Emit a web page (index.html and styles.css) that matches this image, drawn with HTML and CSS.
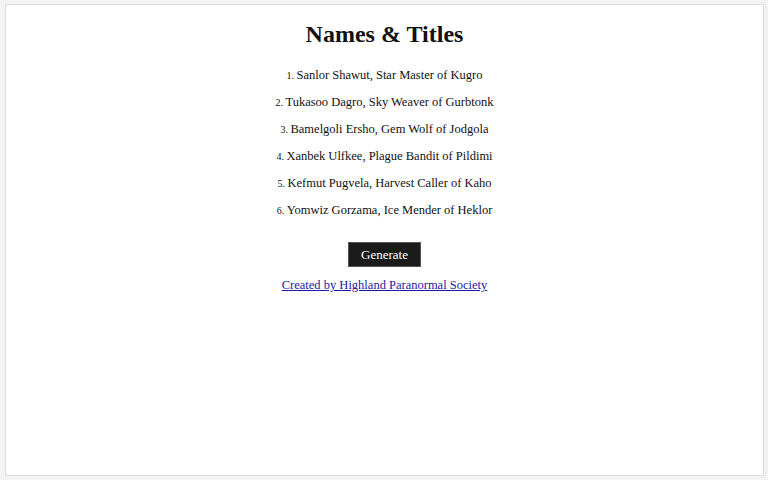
FILE: index.html
```html
<!DOCTYPE html>
<html lang="en">
<head>
<meta charset="utf-8">
<title>Names &amp; Titles</title>
<link rel="stylesheet" href="styles.css">
</head>
<body>
<main class="card">
  <h1 class="title">Names &amp; Titles</h1>
  <ol class="names">
    <li>Sanlor Shawut, Star Master of Kugro</li>
    <li>Tukasoo Dagro, Sky Weaver of Gurbtonk</li>
    <li>Bamelgoli Ersho, Gem Wolf of Jodgola</li>
    <li>Xanbek Ulfkee, Plague Bandit of Pildimi</li>
    <li>Kefmut Pugvela, Harvest Caller of Kaho</li>
    <li>Yomwiz Gorzama, Ice Mender of Heklor</li>
  </ol>
  <button class="generate" type="button">Generate</button>
  <a class="credit" href="#">Created by Highland Paranormal Society</a>
</main>
</body>
</html>
```

FILE: styles.css
```css
html, body {
  margin: 0;
  padding: 0;
  height: 100%;
}
body {
  background: #f3f3f3;
  padding: 4px 4px 4px 5px;
  box-sizing: border-box;
  font-family: "Liberation Serif", "Times New Roman", serif;
  color: #111;
}
.card {
  box-sizing: border-box;
  height: 100%;
  background: #fff;
  border: 1px solid #dcdcdc;
  display: flex;
  flex-direction: column;
  align-items: center;
  padding-top: 14px;
}
.title {
  margin: 0;
  font-size: 24px;
  line-height: 30px;
  font-weight: bold;
  color: #111;
}
.names {
  list-style: none;
  margin: 18px 0 0;
  padding: 0;
  display: flex;
  flex-direction: column;
  align-items: center;
  gap: 11px;
  counter-reset: item;
}
.names li {
  font-size: 12.5px;
  line-height: 16px;
  height: 16px;
  counter-increment: item;
}
.names li::before {
  content: counter(item) ". ";
  font-size: 10px;
  line-height: 1;
}
.generate {
  margin-top: 24px;
  width: 73px;
  height: 25px;
  background: #1b1b1b;
  color: #fff;
  border: 1px solid #555;
  font-family: inherit;
  font-size: 13px;
  padding: 0;
  cursor: pointer;
}
.credit {
  margin-top: 10px;
  font-size: 12.5px;
  line-height: 16px;
  color: #1a1aa6;
  text-decoration: underline;
}
```
